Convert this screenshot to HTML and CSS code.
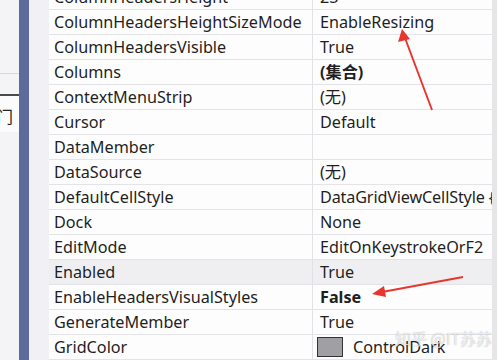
FILE: index.html
```html
<!DOCTYPE html>
<html lang="zh-CN">
<head>
    <meta charset="UTF-8">
    <title>属性</title>
    <link rel="stylesheet" href="styles.css">
</head>
<body>
    <div class="screen">
        <div class="designer">
            <div class="designer-top"></div>
            <div class="designer-box"><span class="clip-label">门</span></div>
        </div>
        <div class="strip"></div>
        <div class="props">
            <div class="gutter"></div>
            <div class="grid">
                <div class="row"><div class="name">ColumnHeadersHeight</div><div class="value">23</div></div>
                <div class="row"><div class="name">ColumnHeadersHeightSizeMode</div><div class="value">EnableResizing</div></div>
                <div class="row"><div class="name">ColumnHeadersVisible</div><div class="value">True</div></div>
                <div class="row"><div class="name">Columns</div><div class="value bold">(集合)</div></div>
                <div class="row"><div class="name">ContextMenuStrip</div><div class="value">(无)</div></div>
                <div class="row"><div class="name">Cursor</div><div class="value">Default</div></div>
                <div class="row"><div class="name">DataMember</div><div class="value"></div></div>
                <div class="row"><div class="name">DataSource</div><div class="value">(无)</div></div>
                <div class="row"><div class="name">DefaultCellStyle</div><div class="value wide">DataGridViewCellStyle {</div></div>
                <div class="row"><div class="name">Dock</div><div class="value">None</div></div>
                <div class="row"><div class="name">EditMode</div><div class="value">EditOnKeystrokeOrF2</div></div>
                <div class="row selected"><div class="name">Enabled</div><div class="value">True</div></div>
                <div class="row"><div class="name">EnableHeadersVisualStyles</div><div class="value bold">False</div></div>
                <div class="row"><div class="name">GenerateMember</div><div class="value">True</div></div>
                <div class="row"><div class="name">GridColor</div><div class="value"><span class="swatch"></span>ControlDark</div></div>
            </div>
            <div class="scrollbar"></div>
        </div>
    </div>

    <svg class="arrows" width="497" height="360" viewBox="0 0 497 360">
        <line x1="432" y1="110" x2="405" y2="38" stroke="#e8352e" stroke-width="2"/>
        <polygon points="402,29 398,42 410,39" fill="#e8352e"/>
        <line x1="463" y1="277" x2="382" y2="292" stroke="#e8352e" stroke-width="2"/>
        <polygon points="372,294 384,286 386,297" fill="#e8352e"/>
    </svg>
    <div class="watermark">知乎 @IT苏苏</div>
</body>
</html>
```

FILE: styles.css
```css
body {
    margin: 0;
    width: 497px;
    height: 360px;
    overflow: hidden;
    font-family: "Noto Sans", "Noto Sans CJK SC", sans-serif;
    font-size: 16.2px;
    color: #1f1f1f;
    background-color: #ffffff;
    position: relative;
}
.screen {
    display: flex;
    height: 360px;
}
.designer {
    width: 19px;
    flex-shrink: 0;
    background-color: #f4f4f6;
    display: flex;
    flex-direction: column;
    overflow: hidden;
}
.designer-top {
    height: 73px;
    border-bottom: 1px solid #d8d8dc;
    flex-shrink: 0;
}
.designer-box {
    margin-top: 20px;
    height: 36px;
    border-top: 2px solid #4a4a4a;
    background-color: #fbfbfb;
    position: relative;
}
.clip-label {
    position: absolute;
    left: -3px;
    top: 8px;
    font-size: 16px;
    color: #222;
    font-family: "Noto Sans CJK SC", sans-serif;
}
.strip {
    width: 10px;
    flex-shrink: 0;
    background-color: #5d6a9c;
}
.props {
    flex: 1;
    min-width: 0;
    display: flex;
}
.gutter {
    width: 20px;
    flex-shrink: 0;
    background-color: #f1f1f5;
}
.grid {
    flex: 1;
    min-width: 0;
    margin-top: -15px;
    background-color: #fdfdfd;
}
.row {
    display: flex;
    height: 24px;
    border-bottom: 1px solid #e4e4e8;
    align-items: center;
}
.row.selected {
    background-color: #efeff1;
}
.name {
    width: 258px;
    flex-shrink: 0;
    padding-left: 5px;
    height: 24px;
    line-height: 24px;
    border-right: 1px solid #e2e2e6;
    white-space: nowrap;
    overflow: hidden;
}
.value {
    flex: 1;
    min-width: 0;
    padding-left: 7px;
    height: 24px;
    line-height: 24px;
    white-space: nowrap;
    overflow: hidden;
    display: flex;
    align-items: center;
}
.value.wide {
    overflow: visible;
    letter-spacing: -0.15px;
}
.bold {
    font-weight: bold;
}
.swatch {
    width: 24px;
    height: 18px;
    border: 1px solid #333;
    background-color: #a0a0a4;
    margin-right: 10px;
    margin-left: -3px;
    flex-shrink: 0;
}
.scrollbar {
    width: 5px;
    flex-shrink: 0;
    background-color: #e6e6e8;
}
.arrows {
    position: absolute;
    left: 0;
    top: 0;
}
.watermark {
    position: absolute;
    left: 395px;
    top: 326px;
    font-family: "Noto Sans CJK SC", sans-serif;
    font-size: 16px;
    color: rgba(255, 255, 255, 0.75);
    text-shadow: 0 0 1px rgba(0, 0, 0, 0.35);
}
```
